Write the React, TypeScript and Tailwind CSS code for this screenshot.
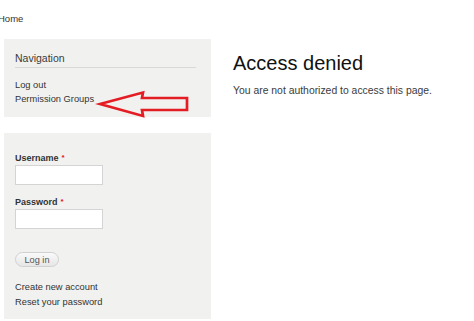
import React from 'react';

const font = { fontFamily: '"Liberation Sans", Arial, sans-serif' };

function Required() {
  return <span className="relative top-[-1px] ml-[3px] text-[8px] leading-none text-[#e3131b] font-bold">*</span>;
}

export default function App() {
  return (
    <div
      className="relative w-[474px] h-[321px] overflow-hidden bg-white text-[#333]"
      style={font}
    >
      {/* Breadcrumb */}
      <div className="h-[39px] pt-[13px] ml-[-2px] text-[9.5px] leading-[11px] text-[#333]">Home</div>

      <div className="flex">
        {/* Sidebar */}
        <aside className="ml-[4px] w-[207px] flex flex-col">
          <div className="relative h-[78px] bg-[#f1f2f0] px-[11px]">
            <h2 className="pt-[12px] pb-[2px] mr-[4px] border-b border-[#d9dad8] text-[10.5px] leading-[14px] text-[#3b3b3b] font-normal">
              Navigation
            </h2>
            <ul className="mt-[10px] text-[9.3px] leading-[14px] text-[#333]">
              <li>Log out</li>
              <li>Permission Groups</li>
            </ul>
            <svg
              className="absolute left-[91px] top-[49px]"
              width="100"
              height="31"
              viewBox="95 88 100 31"
            >
              <polygon
                points="100,104 143,92.5 142,98 187,98 187,110 142,110 143,116"
                fill="none"
                stroke="#e41d24"
                strokeWidth="2.7"
                strokeLinejoin="miter"
              />
            </svg>
          </div>

          <div className="mt-[16px] h-[186px] bg-[#f1f2f0] px-[11px] pt-[19px]">
            <label className="block h-[12px] text-[9px] leading-[12px] font-bold text-[#333]">
              Username<Required />
            </label>
            <input className="mt-[1px] block w-[88px] h-[20px] bg-white border border-[#d4d4d4] outline-none" />
            <label className="mt-[11px] block h-[12px] text-[9px] leading-[12px] font-bold text-[#333]">
              Password<Required />
            </label>
            <input
              type="password"
              className="mt-[1px] block w-[88px] h-[20px] bg-white border border-[#d4d4d4] outline-none"
            />
            <button className="mt-[23px] w-[44px] h-[15px] rounded-full border border-[#d0d0d0] bg-gradient-to-b from-[#fafafa] to-[#e6e6e6] text-[9.2px] leading-[12px] text-[#555]">
              Log in
            </button>
            <ul className="mt-[10px] text-[9.3px] leading-[15px] text-[#333]">
              <li>Create new account</li>
              <li>Reset your password</li>
            </ul>
          </div>
        </aside>

        {/* Main content */}
        <main className="ml-[22px] flex-1">
          <h1 className="mt-[12px] text-[20px] leading-[24px] font-normal text-[#111]">Access denied</h1>
          <p className="mt-[9px] text-[10.4px] leading-[13px] text-[#3b3b3b]">
            You are not authorized to access this page.
          </p>
        </main>
      </div>
    </div>
  );
}
